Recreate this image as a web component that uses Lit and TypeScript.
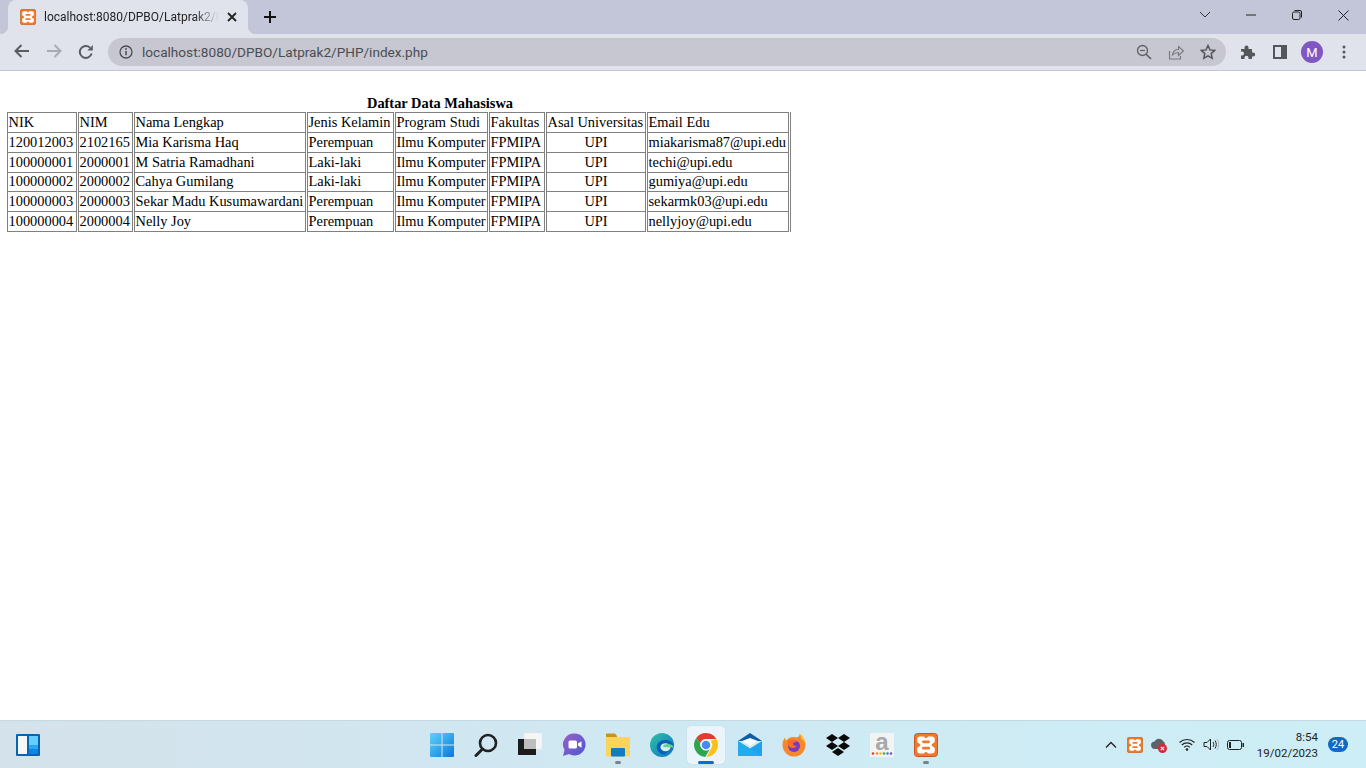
import { LitElement, css, html } from 'lit'
import { customElement } from 'lit/decorators.js'

const HEAD = ['NIK', 'NIM', 'Nama Lengkap', 'Jenis Kelamin', 'Program Studi', 'Fakultas', 'Asal Universitas', 'Email Edu']
const ROWS = [
  ['120012003', '2102165', 'Mia Karisma Haq', 'Perempuan', 'miakarisma87@upi.edu'],
  ['100000001', '2000001', 'M Satria Ramadhani', 'Laki-laki', 'techi@upi.edu'],
  ['100000002', '2000002', 'Cahya Gumilang', 'Laki-laki', 'gumiya@upi.edu'],
  ['100000003', '2000003', 'Sekar Madu Kusumawardani', 'Perempuan', 'sekarmk03@upi.edu'],
  ['100000004', '2000004', 'Nelly Joy', 'Perempuan', 'nellyjoy@upi.edu'],
]
const COLS = [70, 55, 172, 87, 93, 56, 100, 142, 1]

const xampp = (size: number) => html`
  <svg width=${size} height=${size} viewBox="0 0 24 24">
    <rect x="0.5" y="0.5" width="23" height="23" rx="3" fill="#ee7a2d" stroke="#c9591b" />
    <path d="M6 3.500h3.500c1 0 1.500 1.800 2.500 1.800s1.500-1.800 2.500-1.800H18c1.600 0 2.800 1.200 2.800 3v2c0 1.700-3.300 2-3.300 3.500s3.300 1.800 3.300 3.500v2c0 1.800-1.200 3-2.800 3h-3.500c-1 0-1.500-1.800-2.500-1.800s-1.500 1.800-2.500 1.800H6c-1.600 0-2.800-1.200-2.800-3v-2c0-1.700 3.300-2 3.300-3.500S3.200 10.200 3.200 8.500v-2c0-1.800 1.200-3 2.800-3z" fill="#fff" />
    <rect x="8" y="7.400" width="8" height="2.800" rx="1.400" fill="#ee7a2d" />
    <rect x="8" y="13.800" width="8" height="2.800" rx="1.400" fill="#ee7a2d" />
  </svg>`

@customElement('app-root')
export class AppRoot extends LitElement {
  render() {
    return html`
      <div class="tabstrip">
        <div class="tab">
          ${xampp(16)}
          <span class="tab-title">localhost:8080/DPBO/Latprak2/P</span>
          <svg class="tab-close" width="10" height="10" viewBox="0 0 10 10"><path d="M1 1l8 8M9 1l-8 8" stroke="#222" stroke-width="1.8" /></svg>
        </div>
        <svg class="plus" width="12" height="12" viewBox="0 0 12 12"><path d="M6 0v12M0 6h12" stroke="#111" stroke-width="2" /></svg>
        <div class="win-controls">
          <svg width="12" height="8" viewBox="0 0 12 8"><path d="M1 1l5 5 5-5" fill="none" stroke="#333" stroke-width="1" /></svg>
          <svg width="10" height="2" viewBox="0 0 10 2"><path d="M0 1h10" stroke="#222" stroke-width="1" /></svg>
          <svg width="10" height="10" viewBox="0 0 10 10"><rect x="0.5" y="2" width="7.500" height="7.500" rx="1.500" fill="none" stroke="#222" /><path d="M2.500 .5h5.500a1.500 1.500 0 0 1 1.500 1.500v5.500" fill="none" stroke="#222" /></svg>
          <svg width="11" height="11" viewBox="0 0 11 11"><path d="M.5.5l10 10M10.500.5l-10 10" stroke="#222" /></svg>
        </div>
      </div>

      <div class="toolbar">
        <div class="nav">
          <svg width="16" height="14" viewBox="0 0 16 14"><path d="M15 7H2M7.500 1L1.500 7l6 6" fill="none" stroke="#5a5c62" stroke-width="2" /></svg>
          <svg width="16" height="14" viewBox="0 0 16 14"><path d="M1 7h13M8.500 1l6 6-6 6" fill="none" stroke="#a9abb2" stroke-width="2" /></svg>
          <svg width="16" height="16" viewBox="0 0 16 16"><path d="M13.600 9.500A6 6 0 1 1 12 3.600" fill="none" stroke="#5a5c62" stroke-width="2" /><path d="M14.800 1v5.500H9.300z" fill="#5a5c62" /></svg>
        </div>
        <div class="omnibox">
          <svg width="14" height="14" viewBox="0 0 14 14"><circle cx="7" cy="7" r="6" fill="none" stroke="#4c4d52" stroke-width="1.300" /><path d="M7 6v4.300" stroke="#4c4d52" stroke-width="1.500" /><circle cx="7" cy="4" r=".9" fill="#4c4d52" /></svg>
          <span class="url">localhost:8080/DPBO/Latprak2/PHP/index.php</span>
          <div class="omni-actions">
            <svg width="16" height="16" viewBox="0 0 16 16"><circle cx="6.500" cy="6.500" r="5" fill="none" stroke="#5f6064" stroke-width="1.300" /><path d="M10.200 10.200L15 15" stroke="#5f6064" stroke-width="1.600" /><path d="M4 6.500h5" stroke="#5f6064" stroke-width="1.200" /></svg>
            <svg width="16" height="16" viewBox="0 0 16 16"><path d="M1.500 7v8h11v-3" fill="none" stroke="#77787c" stroke-width="1.100" /><path d="M4.500 11c.5-3.500 3-5.500 6-5.500V2.500l5 4.500-5 4.500v-3c-2.500 0-4.500.8-6 2.500z" fill="none" stroke="#77787c" stroke-width="1.100" /></svg>
            <svg width="16" height="16" viewBox="0 0 16 16"><path d="M8 1.500l2 4.400 4.800.5-3.600 3.200 1 4.700L8 11.900l-4.200 2.400 1-4.700L1.200 6.400 6 5.900z" fill="none" stroke="#55565a" stroke-width="1.500" /></svg>
          </div>
        </div>
        <div class="tools">
          <svg width="16" height="16" viewBox="0 0 16 16"><path d="M1 5h3.500V3.500a2 2 0 0 1 4 0V5H12v3.500h1.200a2 2 0 0 1 0 4H12V15H8.500v-1.200a2 2 0 0 0-4 0V15H1v-3.500h1a2 2 0 0 0 0-4H1z" fill="#55565a" /></svg>
          <svg width="14" height="14" viewBox="0 0 14 14"><rect x="1" y="1" width="12" height="12" fill="none" stroke="#55565a" stroke-width="2" /><rect x="8" y="1" width="5" height="12" fill="#55565a" /></svg>
          <span class="avatar">M</span>
          <svg width="4" height="14" viewBox="0 0 4 14"><circle cx="2" cy="2" r="1.500" fill="#55565a" /><circle cx="2" cy="7" r="1.500" fill="#55565a" /><circle cx="2" cy="12" r="1.500" fill="#55565a" /></svg>
        </div>
      </div>

      <main class="page">
        <div class="title">Daftar Data Mahasiswa</div>
        <table>
          <colgroup>${COLS.map((w) => html`<col style="width:${w}px" />`)}</colgroup>
          <tr>${HEAD.map((h) => html`<td>${h}</td>`)}<td class="end"></td></tr>
          ${ROWS.map((r) => html`
            <tr>
              <td>${r[0]}</td><td>${r[1]}</td><td>${r[2]}</td><td>${r[3]}</td>
              <td>Ilmu Komputer</td><td>FPMIPA</td><td class="center">UPI</td><td>${r[4]}</td><td class="end"></td>
            </tr>`)}
        </table>
      </main>

      <footer class="taskbar">
        <svg class="start" width="24" height="22" viewBox="0 0 24 22">
          <rect width="24" height="22" rx="1" fill="#0a63ae" />
          <rect x="2" y="2" width="9" height="18" fill="#f4f6f7" />
          <rect x="13" y="2" width="9" height="9.500" fill="#63ceff" />
          <rect x="13" y="11.500" width="9" height="4" fill="#27a8f5" />
          <rect x="13" y="15.500" width="9" height="4.500" fill="#0a86ea" />
        </svg>
        <div class="apps">
          <div class="app">
            <svg width="24" height="24" viewBox="0 0 24 24"><defs><linearGradient id="wn" x1="0" y1="0" x2="1" y2="1"><stop offset="0" stop-color="#5fd3fa" /><stop offset="1" stop-color="#0a78dc" /></linearGradient></defs><path d="M0 1a1 1 0 0 1 1-1h10.500v11.500H0zM12.500 0H23a1 1 0 0 1 1 1v10.500H12.500zM0 12.500h11.500V24H1a1 1 0 0 1-1-1zM12.500 12.500H24V23a1 1 0 0 1-1 1H12.500z" fill="url(#wn)" /></svg>
          </div>
          <div class="app">
            <svg width="24" height="24" viewBox="0 0 24 24"><circle cx="14" cy="10" r="8" fill="none" stroke="#222" stroke-width="2.600" /><path d="M8.500 16L2 22.500" stroke="#222" stroke-width="3" stroke-linecap="round" /></svg>
          </div>
          <div class="app">
            <svg width="24" height="24" viewBox="0 0 24 24"><rect x="6" y="0" width="18" height="16" fill="#f6f6f6" /><rect x="6" y="0" width="18" height="16" fill="none" stroke="#e2e6e8" stroke-width=".5" /><rect x="0" y="6" width="18" height="16" fill="#1c1c1c" /><rect x="6" y="6" width="12" height="10" fill="#bdbdbd" /></svg>
          </div>
          <div class="app">
            <svg width="24" height="24" viewBox="0 0 24 24"><defs><linearGradient id="mt" x1="0" y1="0" x2="1" y2="1"><stop offset="0" stop-color="#9b5fc7" /><stop offset="1" stop-color="#4a5bd0" /></linearGradient></defs><path d="M12.500 0.500a11 11 0 1 1-5.500 20.500L1 23l1.500-6A11 11 0 0 1 12.500.5z" fill="url(#mt)" /><rect x="6.500" y="7.500" width="8.500" height="8" rx="1.500" fill="#fff" /><path d="M16 10.500l3.500-2.300v6.600L16 12.500z" fill="#fff" /></svg>
          </div>
          <div class="app dot">
            <svg width="24" height="24" viewBox="0 0 24 24"><path d="M0 1.500A1 1 0 0 1 1 .5h8l2 2.500v3H0z" fill="#c99517" /><path d="M0 4h24v18.500a1 1 0 0 1-1 1H1a1 1 0 0 1-1-1z" fill="#fcd35c" /><rect x="5" y="15" width="14" height="8.500" rx="1" fill="#0f7cc4" /></svg>
          </div>
          <div class="app">
            <svg width="24" height="24" viewBox="0 0 24 24"><defs><linearGradient id="eg" x1="0" y1="0" x2="1" y2="1"><stop offset="0" stop-color="#2fc5a0" /><stop offset="1" stop-color="#0f6fcf" /></linearGradient></defs><circle cx="12" cy="12" r="12" fill="url(#eg)" /><path d="M23.800 13.500c-.5-4-4-6.500-8.500-6.500-5 0-8.500 3-8.500 7s3.500 7.500 8 7.500" fill="#0b5fb8" /><ellipse cx="15.500" cy="14.200" rx="5" ry="4" fill="#d5eff7" /><path d="M13 14c0-2 2-3 4.500-3s6 1 6.300 3.500" fill="#5fd38c" /></svg>
          </div>
          <div class="app active">
            <svg width="24" height="24" viewBox="0 0 24 24"><path d="M12 0a12 12 0 0 1 10.400 6H12a6 6 0 0 0-5.700 4L2.300 5A12 12 0 0 1 12 0z" fill="#e33b2e" /><path d="M22.400 6A12 12 0 0 1 12.500 24l4.700-8.500A6 6 0 0 0 16.500 8z" fill="#fbc116" /><path d="M2.300 5a12 12 0 0 0 8.900 18.900l5-8.300a6 6 0 0 1-9.900-5.600z" fill="#2da44e" /><circle cx="12" cy="12" r="5.500" fill="#fff" /><circle cx="12" cy="12" r="4.300" fill="#4a89f3" /></svg>
          </div>
          <div class="app">
            <svg width="24" height="24" viewBox="0 0 24 24"><path d="M12 0l12 8H0z" fill="#0d5ea8" /><path d="M0 8l12 7.500L24 8v15H0z" fill="#1fa2ea" /><path d="M4 8l8-3 8 3-8 5z" fill="#f5fbfe" /><path d="M0 8v15h24z" fill="#27b1f3" opacity=".6" /></svg>
          </div>
          <div class="app">
            <svg width="24" height="24" viewBox="0 0 24 24"><path d="M18 1c3 3 5.500 6.500 5.500 11a11.500 11.500 0 0 1-23 0c0-3 1-5.500 2.500-7.500 0 1.500.5 2.500 1.500 3C6 5 9 3.500 12 4c2 .3 4.500 1.500 6-3z" fill="#f7872b" /><path d="M17 0c3 2 6.500 6 6.500 11 0-1-2-4-4.500-5.500C19 3 18 1.500 17 0z" fill="#fcc43a" /><circle cx="12" cy="13" r="6" fill="#7a3bb8" /><path d="M5.500 8c3-2 8-2.500 11 1-3-1-5.500.5-5.500 2 0 1 1.500 2 3.500 2-1 2.500-6 3-8-.5-1-1.500-1.500-3-1-4.500z" fill="#fb6a2f" /></svg>
          </div>
          <div class="app">
            <svg width="24" height="22" viewBox="0 0 24 22"><path d="M6 0l6 4-6 4-6-4zM18 0l6 4-6 4-6-4zM6 8l6 4-6 4-6-4zM18 8l6 4-6 4-6-4zM12 14l6 4-6 4-6-4z" fill="#0a0a0a" /></svg>
          </div>
          <div class="app">
            <svg class="amz" width="24" height="24" viewBox="0 0 24 24"><rect width="24" height="24" fill="#f2f4f4" /><text x="12" y="16.500" text-anchor="middle" font-family="'Liberation Sans', sans-serif" font-size="24" font-weight="700" fill="#a6a8a9">a</text><g><circle cx="3" cy="20.500" r="1.300" fill="#e5392f" /><circle cx="7" cy="20.500" r="1.300" fill="#f08a24" /><circle cx="10.500" cy="20.500" r="1.300" fill="#f5b81f" /><circle cx="14" cy="20.500" r="1.300" fill="#52a844" /><circle cx="17.500" cy="20.500" r="1.300" fill="#3c7fd6" /><circle cx="21" cy="20.500" r="1.300" fill="#8a4dbd" /></g></svg>
          </div>
          <div class="app dot">${xampp(24)}</div>
        </div>
        <div class="tray">
          <svg width="12" height="7" viewBox="0 0 12 7"><path d="M1 6.500l5-5 5 5" fill="none" stroke="#222" stroke-width="1.300" /></svg>
          <span class="tray-gap10">${xampp(16)}</span>
          <svg width="16" height="16" viewBox="0 0 16 16"><path d="M4 12a3.800 3.800 0 0 1-.3-7.600A4.800 4.800 0 0 1 12 4a4 4 0 0 1 2 4v4z" fill="#5c6368" /><circle cx="11.500" cy="11.500" r="4.500" fill="#d9263a" /><path d="M9.800 9.800l3.400 3.400M13.200 9.800l-3.400 3.400" stroke="#fff" stroke-width="1.100" /></svg>
          <svg class="tray-gap12" width="16" height="13" viewBox="0 0 16 13"><path d="M.5 4.500a11 11 0 0 1 15 0M2.800 7a7.500 7.500 0 0 1 10.400 0M5.200 9.300a4 4 0 0 1 5.600 0" fill="none" stroke="#222" stroke-width="1.100" /><circle cx="8" cy="11.500" r="1.300" fill="#222" /></svg>
          <svg width="16" height="13" viewBox="0 0 16 13"><path d="M1 4.500h3L7.500 1v11L4 8.500H1z" fill="none" stroke="#222" stroke-width="1" /><path d="M10 4c1 1.500 1 3.500 0 5M12 2.500c1.700 2.500 1.700 5.500 0 8" fill="none" stroke="#222" stroke-width="1" /><path d="M14 1c2.200 3.300 2.200 7.700 0 11" fill="none" stroke="#a9b4ba" stroke-width="1" /></svg>
          <svg width="17" height="10" viewBox="0 0 17 10"><rect x=".5" y=".5" width="14" height="9" rx="2" fill="none" stroke="#222" /><rect x="2" y="2" width="2" height="6" fill="#222" /><rect x="15.500" y="3" width="1.500" height="4" fill="#222" /></svg>
          <div class="clock"><span>8:54</span><span>19/02/2023</span></div>
          <span class="badge">24</span>
        </div>
      </footer>
    `
  }

  static styles = css`
    :host {
      display: flex;
      flex-direction: column;
      height: 768px;
      overflow: hidden;
      font-family: Roboto, 'Noto Sans', sans-serif;
    }

    svg {
      display: block;
      flex: none;
    }

    svg.amz {
      overflow: visible;
    }

    .tabstrip {
      display: flex;
      align-items: flex-end;
      height: 34px;
      flex: none;
      padding-left: 8px;
      background: #c3c5d8;
    }

    .tab {
      position: relative;
      display: flex;
      align-items: center;
      width: 240px;
      height: 34px;
      padding: 0 11px 0 12px;
      box-sizing: border-box;
      background: #e1e3ec;
      border-radius: 8px 8px 0 0;
    }

    .tab::before,
    .tab::after {
      content: '';
      position: absolute;
      bottom: 0;
      width: 8px;
      height: 8px;
    }

    .tab::before {
      left: -8px;
      background: radial-gradient(circle at 0 0, transparent 8px, #e1e3ec 8.5px);
    }

    .tab::after {
      right: -8px;
      background: radial-gradient(circle at 100% 0, transparent 8px, #e1e3ec 8.5px);
    }

    .tab-title {
      width: 175px;
      margin-left: 8px;
      font-size: 12px;
      color: #222;
      white-space: nowrap;
      -webkit-mask-image: linear-gradient(to right, #000 150px, transparent 175px);
      mask-image: linear-gradient(to right, #000 150px, transparent 175px);
    }

    .tab-close {
      margin-left: 8px;
    }

    .plus {
      align-self: center;
      margin-left: 16px;
    }

    .win-controls {
      display: grid;
      grid-template-columns: repeat(4, 46px);
      justify-items: center;
      align-items: center;
      align-self: flex-start;
      margin-left: auto;
      height: 30px;
    }

    .toolbar {
      display: flex;
      align-items: center;
      flex: none;
      box-sizing: border-box;
      height: 37px;
      background: #e1e3ec;
      border-bottom: 1px solid #c4c5cc;
    }

    .nav {
      display: grid;
      grid-template-columns: repeat(3, 32px);
      justify-items: center;
      width: 108px;
      padding-left: 6px;
      box-sizing: border-box;
    }

    .omnibox {
      display: flex;
      align-items: center;
      width: 1118px;
      height: 28px;
      padding: 0 2px 0 11px;
      box-sizing: border-box;
      border-radius: 14px;
      background: #c6c7d0;
    }

    .url {
      margin-left: 9px;
      font-size: 13.6px;
      color: #4c4d52;
    }

    .omni-actions {
      display: grid;
      grid-template-columns: repeat(3, 32px);
      justify-items: center;
      margin-left: auto;
    }

    .tools {
      display: grid;
      grid-template-columns: repeat(4, 32px);
      justify-items: center;
      align-items: center;
      margin-left: 6px;
    }

    .avatar {
      display: grid;
      place-content: center;
      width: 22px;
      height: 22px;
      border-radius: 50%;
      background: #7e57c2;
      color: #fff;
      font-size: 13px;
    }

    .page {
      flex: 1;
      background: #fff;
      padding-top: 24px;
      font-family: 'Liberation Serif', serif;
      font-size: 14.4px;
      color: #000;
    }

    .title {
      width: 866px;
      margin-left: 7px;
      height: 17px;
      line-height: 16px;
      font-weight: 700;
      text-align: center;
    }

    table {
      margin-left: 6px;
      border-spacing: 1px 0;
      border-collapse: separate;
      table-layout: fixed;
      width: 786px;
    }

    td {
      height: 20px;
      padding: 0 0.5px;
      box-sizing: border-box;
      border: 1px solid #808080;
      border-bottom: none;
      white-space: nowrap;
      line-height: 18px;
      vertical-align: top;
    }

    tr:nth-child(4) td {
      height: 19px;
      line-height: 16px;
    }

    tr:last-child td {
      height: 21px;
      border-bottom: 1px solid #808080;
    }

    td.center {
      text-align: center;
    }

    td.end {
      padding: 0;
      border-left: none;
    }

    .taskbar {
      display: flex;
      align-items: center;
      height: 48px;
      flex: none;
      box-sizing: border-box;
      border-top: 1px solid #c5d9e3;
      background: linear-gradient(to right, #d4e2eb, #cfe9f3 50%, #cdeef6);
    }

    .start {
      margin-left: 16px;
    }

    .apps {
      display: flex;
      align-items: center;
      margin-left: 380px;
    }

    .app {
      position: relative;
      display: grid;
      place-items: center;
      width: 44px;
      height: 38px;
      box-sizing: border-box;
    }

    .app.active {
      background: rgba(255, 255, 255, 0.55);
      border-radius: 4px;
      box-shadow: 0 0 1px rgba(0, 0, 0, 0.25);
      width: 38px;
      margin: 0 3px;
    }

    .app.active::after,
    .app.dot::after {
      content: '';
      position: absolute;
      bottom: 0;
      left: 50%;
      transform: translateX(-50%);
      height: 3px;
      border-radius: 2px;
    }

    .app.active::after {
      width: 16px;
      background: #0a6cc9;
    }

    .app.dot::after {
      width: 6px;
      background: #7c8388;
    }

    .tray {
      display: flex;
      align-items: center;
      margin-left: auto;
      padding-right: 18px;
      gap: 8px;
    }

    .tray-gap10 {
      margin-left: 2px;
    }

    .tray-gap12 {
      margin-left: 4px;
    }

    .clock {
      display: flex;
      flex-direction: column;
      align-items: flex-end;
      gap: 2px;
      margin-left: 5px;
      padding-top: 1px;
      font-size: 11.5px;
      line-height: 14px;
      color: #222;
    }

    .badge {
      display: grid;
      place-content: center;
      width: 20px;
      height: 15px;
      margin-left: 2px;
      border-radius: 8px;
      background: #0b6cc4;
      color: #fff;
      font-size: 11px;
    }
  `
}

declare global {
  interface HTMLElementTagNameMap {
    'app-root': AppRoot
  }
}
